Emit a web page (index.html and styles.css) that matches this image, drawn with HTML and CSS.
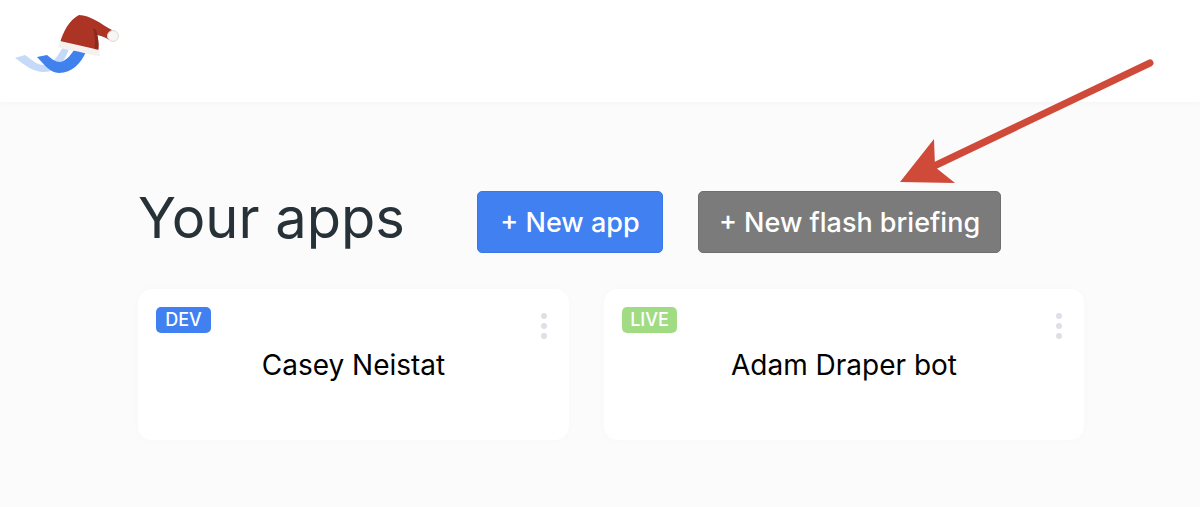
FILE: index.html
```html
<!DOCTYPE html>
<html>
<head>
    <title>Your apps</title>
    <link rel="stylesheet" href="styles.css">
</head>
<body>
    <div id="header">
        <svg class="logo" width="130" height="80" viewBox="0 0 130 80">
            <path d="M15 58 L25 55 C32 60 37 65 44 65 C52 65 58 56 63 47 L69 49 C65 60 58 72 44 72 C33 72 25 65 15 58 Z" fill="#c5d9f8"/>
            <path d="M37 57 L47 55 C52 59 55 62 60 62 C66 61 70 56 74 50 L86 52 C81 63 72 73 59 73 C50 73 44 64 37 57 Z" fill="#4081ee"/>
            <path d="M60 43 C63 32 69 20 79 15 C90 15 101 24 112 30 L109 40 C105 37 101 36 97 35 C99 41 99 47 98 52 C85 48 72 46 60 43 Z" fill="#ab3424"/>
            <path d="M93 28 C95 36 96 44 94 50 L98 51 C99 43 98 35 96 30 Z" fill="#8a2a1c"/>
            <path d="M60 41 C73 44 87 47 99 50 L100 56 C95 56 88 54 80 52 C72 50 64 50 58 47 Z" fill="#f6f1ee"/>
            <circle cx="113" cy="36" r="5.5" fill="#f8f6f4" stroke="#dcd8d4" stroke-width="1"/>
        </svg>
    </div>
    <div id="content">
        <div class="title-row">
            <h1 class="page-title">Your apps</h1>
            <button class="action-button new-app">+ New app</button>
            <button class="action-button new-briefing">+ New flash briefing</button>
        </div>
        <div class="card-row">
            <div class="app-card card-casey">
                <div class="card-top">
                    <span class="badge badge-dev">DEV</span>
                    <div class="menu-dots"><i></i><i></i><i></i></div>
                </div>
                <div class="app-name">Casey Neistat</div>
            </div>
            <div class="app-card card-adam">
                <div class="card-top">
                    <span class="badge badge-live">LIVE</span>
                    <div class="menu-dots"><i></i><i></i><i></i></div>
                </div>
                <div class="app-name">Adam Draper bot</div>
            </div>
        </div>
    </div>
    <svg class="arrow" width="1200" height="507" viewBox="0 0 1200 507">
        <line x1="1150" y1="63" x2="930" y2="168" stroke="#d04a39" stroke-width="7" stroke-linecap="round"/>
        <polygon points="900,182 934,139 935,167 955,183" fill="#d04a39"/>
    </svg>
</body>
</html>
```

FILE: styles.css
```css
body {
    margin: 0;
    padding: 0;
    background: #fbfbfb;
    font-family: Inter, Arial, sans-serif;
    height: 507px;
    overflow: hidden;
    position: relative;
}
#header {
    height: 102px;
    background: white;
    box-shadow: 0 1px 6px rgba(0, 0, 0, 0.03);
}
.logo {
    display: block;
}
#content {
    padding: 89px 0 0 138px;
}
.title-row {
    display: flex;
    align-items: center;
    height: 62px;
}
.page-title {
    margin: 0 0 8px;
    width: 339px;
    font-size: 56px;
    font-weight: 400;
    color: #263238;
}
.action-button {
    height: 62px;
    box-sizing: border-box;
    border-radius: 5px;
    font-family: Inter, Arial, sans-serif;
    font-size: 27px;
    font-weight: 500;
    color: white;
    padding: 0;
}
.new-app {
    width: 186px;
    margin-right: 35px;
    background: #4080f0;
    border: 1px solid #3b78e7;
}
.new-briefing {
    width: 303px;
    background: #7b7b7b;
    border: 1px solid #6f6f6f;
}
.card-row {
    display: flex;
    gap: 35px;
    margin-top: 36px;
}
.app-card {
    height: 151px;
    box-sizing: border-box;
    padding: 18px 18px;
    background: white;
    border-radius: 14px;
    box-shadow: 0 0 8px rgba(0, 0, 0, 0.02);
}
.card-casey {
    width: 431px;
}
.card-adam {
    width: 480px;
}
.card-top {
    display: flex;
    justify-content: space-between;
    height: 26px;
}
.badge {
    width: 55px;
    height: 26px;
    line-height: 26px;
    text-align: center;
    border-radius: 5px;
    color: white;
    font-size: 18px;
    font-weight: 500;
}
.badge-dev {
    background: #4080f0;
}
.badge-live {
    background: #a1dc85;
}
.menu-dots {
    display: flex;
    flex-direction: column;
    gap: 4px;
    padding: 6px 4px 0 0;
}
.menu-dots i {
    display: block;
    flex: none;
    width: 6px;
    height: 6px;
    border-radius: 50%;
    background: #dde0e6;
}
.app-name {
    margin-top: 15px;
    text-align: center;
    font-size: 28px;
    color: black;
}
.arrow {
    position: absolute;
    top: 0;
    left: 0;
    pointer-events: none;
}
```
